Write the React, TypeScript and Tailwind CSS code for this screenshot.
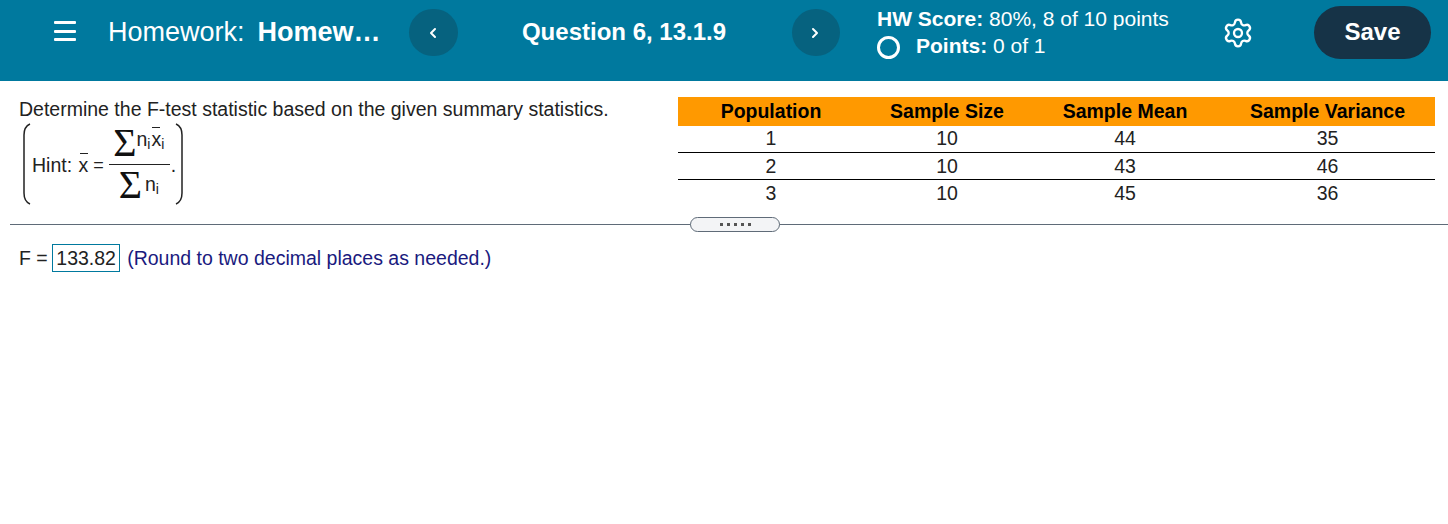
import { ChevronLeft, ChevronRight, Settings } from "lucide-react";

const rows = [
  ["1", "10", "44", "35"],
  ["2", "10", "43", "46"],
  ["3", "10", "45", "36"],
];

function Paren({ flip }: { flip?: boolean }) {
  return (
    <svg width="9" height="82" viewBox="0 0 9 82" className={flip ? "-scale-x-100" : ""} fill="none" stroke="#222" strokeWidth="1.5">
      <path d="M8 1 C3.500 3 2 6 2 12 L2 70 C2 76 3.500 79 8 81" />
    </svg>
  );
}

function XBar() {
  return (
    <span className="relative">
      x
      <span className="absolute left-[1px] top-[-1px] h-[1px] w-[8px] bg-[#222]" />
    </span>
  );
}

function Sigma() {
  return <span className="font-['Liberation_Serif',serif] text-[40px] leading-none text-[#111]">Σ</span>;
}

function Hint() {
  return (
    <div className="ml-[3px] mt-[1px] flex h-[84px] items-center">
      <Paren />
      <div className="ml-[1px] flex items-center">
        <span className="mt-[3px]">Hint:&nbsp;</span>
        <span className="ml-[1px] mt-[3px]"><XBar /></span>
        <span className="mt-[3px] text-[18px]">&nbsp;=&nbsp;</span>
        <div className="flex w-[61px] flex-col items-center">
          <div className="flex h-[41px] w-full items-center justify-center border-b border-[#222]">
            <span className="-ml-[1px]"><Sigma /></span>
            <span className="mt-[-8px]">n<sub className="text-[14px]">i</sub></span>
            <span className="ml-[1px] mt-[-8px]"><XBar /><sub className="text-[14px]">i</sub></span>
          </div>
          <div className="flex h-[40px] items-center justify-center pt-[2px]">
            <span className="-ml-[1px]"><Sigma /></span>
            <span className="ml-[3px] mt-[-2px]">n<sub className="text-[14px]">i</sub></span>
          </div>
        </div>
        <span className="ml-[1px] mt-[3px]">.</span>
      </div>
      <div className="-ml-[1px]">
        <Paren flip />
      </div>
    </div>
  );
}

export default function App() {
  return (
    <div className="h-[524px] w-[1448px] overflow-hidden bg-white font-['Liberation_Sans',Arial,sans-serif] text-[19.5px] text-[#222]">
      {/* Top bar */}
      <header className="flex h-[81px] items-start bg-[#00799e] text-white">
        <button className="ml-[54px] mt-[21px] flex h-[20px] w-[22px] flex-col justify-between">
          <span className="h-[3px] w-full rounded-[1px] bg-white" />
          <span className="h-[3px] w-full rounded-[1px] bg-white" />
          <span className="h-[3px] w-full rounded-[1px] bg-white" />
        </button>
        <div className="ml-[32px] mt-[16px] flex w-[301px] text-[27px] leading-[33px]">
          <span>Homework:</span>
          <span className="ml-[13px] font-bold">Homew…</span>
        </div>
        <button className="mt-[9px] flex h-[47px] w-[49px] items-center justify-center rounded-full bg-[#06627f]">
          <ChevronLeft size={16} strokeWidth={3} className="-translate-x-[1px]" />
        </button>
        <div className="mt-[17px] w-[332px] text-center text-[24px] font-bold leading-[30px]">Question 6, 13.1.9</div>
        <button className="ml-[2px] mt-[9px] flex h-[47px] w-[48px] items-center justify-center rounded-full bg-[#06627f]">
          <ChevronRight size={16} strokeWidth={3} className="-translate-x-[1px]" />
        </button>
        <div className="ml-[37px] mt-[5px] w-[345px] text-[21px] leading-[28px]">
          <div className="flex">
            <span className="font-bold">HW Score:</span>
            <span>&nbsp;80%, 8 of 10 points</span>
          </div>
          <div className="mt-[-1px] flex items-center">
            <span className="mt-[3px] h-[23px] w-[23px] rounded-full border-[3px] border-white" />
            <span className="ml-[16px] font-bold">Points:</span>
            <span>&nbsp;0 of 1</span>
          </div>
        </div>
        <Settings size={32} strokeWidth={1.75} className="mt-[17px]" />
        <button className="ml-[60px] mt-[6px] h-[53px] w-[117px] rounded-[27px] bg-[#163347] pb-[2px] text-[24px] font-bold text-white">Save</button>
      </header>

      {/* Question */}
      <div className="flex h-[136px] pl-[19px]">
        <div className="w-[659px] pt-[16px]">
          <div className="leading-[24px]">Determine the F-test statistic based on the given summary statistics.</div>
          <Hint />
        </div>
        <table className="mt-[16px] h-[109px] w-[757px] table-fixed border-separate border-spacing-0 self-start text-center leading-[24px]">
          <colgroup>
            <col className="w-[186px]" />
            <col className="w-[166px]" />
            <col className="w-[190px]" />
            <col className="w-[215px]" />
          </colgroup>
          <thead>
            <tr className="h-[29px] bg-[#ff9900] font-bold text-black">
              <th className="p-0 pb-[1px]">Population</th>
              <th className="p-0 pb-[1px]">Sample Size</th>
              <th className="p-0 pb-[1px]">Sample Mean</th>
              <th className="p-0 pb-[1px]">Sample Variance</th>
            </tr>
          </thead>
          <tbody>
            {rows.map((row, i) => (
              <tr key={row[0]} className={i < 2 ? "h-[27px]" : "h-[26px]"}>
                {row.map((cell, j) => (
                  <td
                    key={j}
                    className={
                      i === 0
                        ? "border-b border-black p-0 align-top"
                        : i === 1
                          ? "border-b border-black p-0 pt-[1px] align-top"
                          : "p-0 pt-[1px] align-top"
                    }
                  >
                    {cell}
                  </td>
                ))}
              </tr>
            ))}
          </tbody>
        </table>
      </div>

      {/* Divider with drag handle */}
      <div className="relative ml-[10px] mt-[7px] h-[1px] bg-[#5f6b78]">
        <div className="absolute left-[680px] top-[-7px] flex h-[15px] w-[90px] items-center justify-center gap-[4px] rounded-[8px] border border-[#5f6b78] bg-[#f3f4f6]">
          {[0, 1, 2, 3, 4].map((d) => (
            <span key={d} className="h-[3px] w-[3px] bg-[#555]" />
          ))}
        </div>
      </div>

      {/* Answer */}
      <div className="ml-[19px] mt-[19px] flex h-[28px] items-center">
        <span className="pt-[1px]">F =&nbsp;</span>
        <span className="ml-[-1px] flex h-[28px] w-[68px] items-center justify-center border border-[#00799e] pt-[1px]">133.82</span>
        <span className="ml-[7px] pt-[1px] text-[#1a1a7e]">(Round to two decimal places as needed.)</span>
      </div>
    </div>
  );
}
